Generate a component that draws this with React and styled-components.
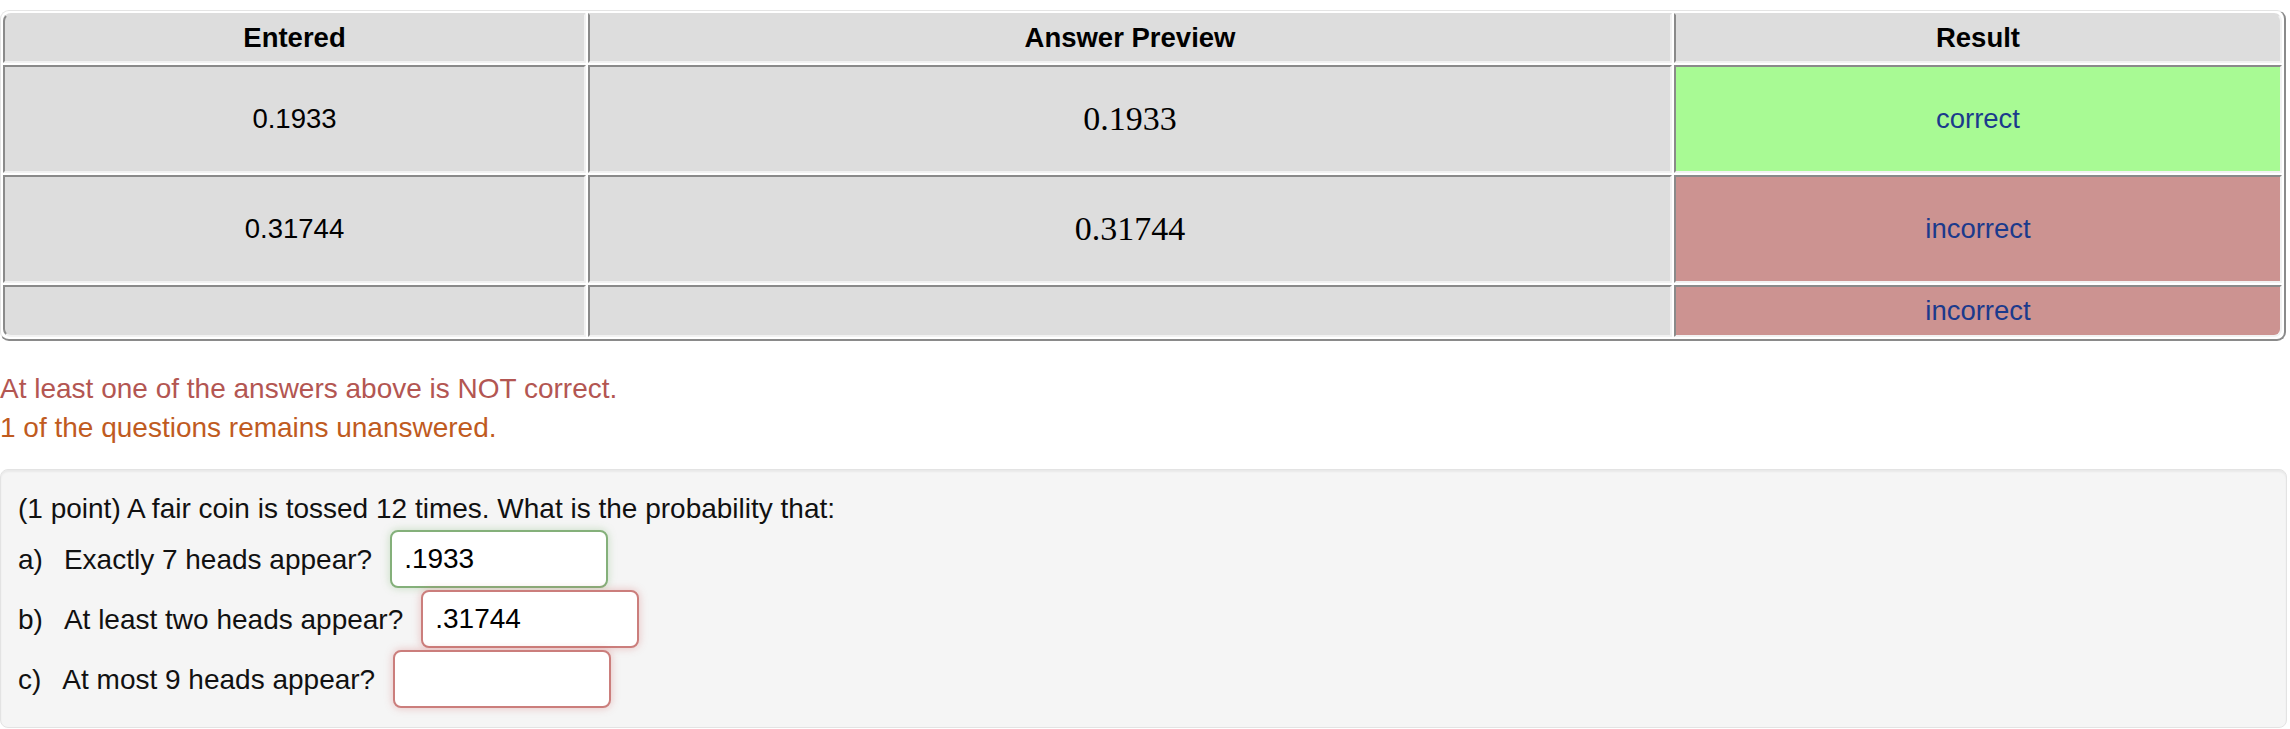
import React from "react";
import styled, { createGlobalStyle } from "styled-components";

const Global = createGlobalStyle`
  * { box-sizing: border-box; }
  html, body { margin: 0; padding: 0; background: #ffffff; }
  body { font-family: "Liberation Sans", Arial, Helvetica, sans-serif; color: #111; }
`;

const Page = styled.div`
  width: 2287px;
  padding-top: 10px;
`;

const Table = styled.table`
  width: 2286px;
  table-layout: fixed;
  border-collapse: separate;
  border-spacing: 2px;
  border-style: solid;
  border-width: 1px 2px 2px 1px;
  border-color: #e4e4e4 #8a8a8a #8a8a8a #e4e4e4;
  border-radius: 9px;
  background: #ffffff;
  font-size: 27.5px;
`;

const HeadCell = styled.th`
  box-sizing: content-box;
  width: ${(p) => p.$w}px;
  height: 46px;
  padding: 0;
  background: #dddddd;
  color: #000;
  font-weight: bold;
  text-align: center;
  vertical-align: middle;
  border-style: solid;
  border-width: 2px;
  border-color: #dddddd #f2f2f2 #f2f2f2 #8a8a8a;
  &:first-child { border-top-left-radius: 8px; }
  &:last-child { border-top-right-radius: 8px; }
`;

const tones = {
  plain: { bg: "#dddddd", fg: "#000000" },
  correct: { bg: "#a8fa94", fg: "#1b3a8c" },
  incorrect: { bg: "#cc9391", fg: "#1b3a8c" },
};

const Cell = styled.td`
  box-sizing: content-box;
  height: ${(p) => (p.$tall ? 104 : 48)}px;
  padding: 0;
  text-align: center;
  vertical-align: middle;
  background: ${(p) => tones[p.$tone || "plain"].bg};
  color: ${(p) => tones[p.$tone || "plain"].fg};
  font-family: ${(p) =>
    p.$serif
      ? '"Liberation Serif", "Times New Roman", serif'
      : '"Liberation Sans", Arial, sans-serif'};
  font-size: ${(p) => (p.$serif ? 34 : 27.5)}px;
  border-style: solid;
  border-width: 2px;
  border-color: #8a8a8a #f2f2f2 #f2f2f2 #8a8a8a;
  tr:last-child > &:first-child { border-bottom-left-radius: 8px; }
  tr:last-child > &:last-child { border-bottom-right-radius: 8px; }
`;

const Messages = styled.div`
  margin-top: 28px;
  font-size: 28px;
  line-height: 39px;
`;

const Message = styled.div`
  color: ${(p) => p.$color};
`;

const ProblemBox = styled.div`
  margin-top: 22px;
  background: #f5f5f5;
  border: 1px solid #e3e3e3;
  border-radius: 8px;
  box-shadow: inset 0 2px 2px rgba(0, 0, 0, 0.05);
  padding: 19px 17px 18px 17px;
  font-size: 28px;
  color: #111;
`;

const Intro = styled.div`
  line-height: 39px;
  margin-bottom: 1px;
`;

const QuestionRow = styled.div`
  display: flex;
  align-items: center;
  height: 60px;
  line-height: 39px;
`;

const Marker = styled.span`
  margin-right: 21px;
`;

const inputTones = {
  correct: { border: "#84b07a", glow: "rgba(110, 175, 95, 0.35)" },
  incorrect: { border: "#cb7e7c", glow: "rgba(205, 90, 90, 0.35)" },
};

const AnswerInput = styled.input`
  width: 218px;
  height: 58px;
  margin-left: 18px;
  padding: 0 12px;
  border: 2px solid ${(p) => inputTones[p.$state].border};
  border-radius: 8px;
  background: #ffffff;
  box-shadow: 0 0 9px ${(p) => inputTones[p.$state].glow};
  font-family: "Liberation Sans", Arial, sans-serif;
  font-size: 28px;
  color: #000;
  outline: none;
`;

const rows = [
  { entered: "0.1933", preview: "0.1933", result: "correct", tall: true },
  { entered: "0.31744", preview: "0.31744", result: "incorrect", tall: true },
  { entered: "", preview: "", result: "incorrect", tall: false },
];

const questions = [
  { mark: "a)", text: "Exactly 7 heads appear?", value: ".1933", state: "correct" },
  { mark: "b)", text: "At least two heads appear?", value: ".31744", state: "incorrect" },
  { mark: "c)", text: "At most 9 heads appear?", value: "", state: "incorrect" },
];

export default function App() {
  return (
    <Page>
      <Global />
      <Table>
        <thead>
          <tr>
            <HeadCell $w={579}>Entered</HeadCell>
            <HeadCell $w={1080}>Answer Preview</HeadCell>
            <HeadCell $w={604}>Result</HeadCell>
          </tr>
        </thead>
        <tbody>
          {rows.map((r, i) => (
            <tr key={i}>
              <Cell $tall={r.tall}>{r.entered}</Cell>
              <Cell $tall={r.tall} $serif>
                {r.preview}
              </Cell>
              <Cell $tall={r.tall} $tone={r.result}>
                {r.result}
              </Cell>
            </tr>
          ))}
        </tbody>
      </Table>
      <Messages>
        <Message $color="#b35652">At least one of the answers above is NOT correct.</Message>
        <Message $color="#c05b1f">1 of the questions remains unanswered.</Message>
      </Messages>
      <ProblemBox>
        <Intro>(1 point) A fair coin is tossed 12 times. What is the probability that:</Intro>
        {questions.map((q) => (
          <QuestionRow key={q.mark}>
            <Marker>{q.mark}</Marker>
            <span>{q.text}</span>
            <AnswerInput $state={q.state} defaultValue={q.value} readOnly />
          </QuestionRow>
        ))}
      </ProblemBox>
    </Page>
  );
}
